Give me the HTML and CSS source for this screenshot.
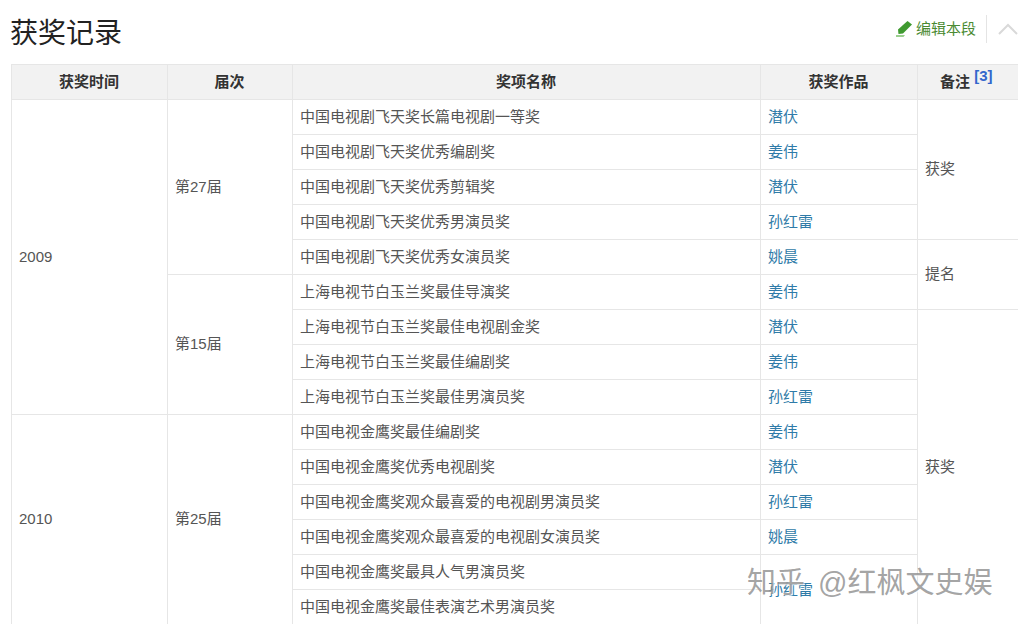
FILE: index.html
```html
<!DOCTYPE html>
<html lang="zh">
<head>
<meta charset="utf-8">
<title>获奖记录</title>
<link rel="stylesheet" href="styles.css">
</head>
<body>
<div class="page">
  <header class="head">
    <h2 class="title">获奖记录</h2>
    <div class="tools">
      <svg class="pen" width="18" height="18" viewBox="0 0 18 18"><path d="M12.500 1 17 4.500 8 13.500 3.500 14 3 9.500Z" fill="#3f9a30"/><path d="M1 15H10L8.500 17H1Z" fill="#9bcf8f"/></svg>
      <span class="edit">编辑本段</span>
      <span class="sep"></span>
      <svg class="up" width="20" height="12" viewBox="0 0 20 12"><path d="M1 11 10 2 19 11" fill="none" stroke="#d9d9d9" stroke-width="2"/></svg>
    </div>
  </header>
  <table class="awards">
    <colgroup><col class="c1"><col class="c2"><col class="c3"><col class="c4"><col class="c5"></colgroup>
    <thead>
      <tr><th>获奖时间</th><th>届次</th><th>奖项名称</th><th>获奖作品</th><th class="note">备注 <sup>[3]</sup></th></tr>
    </thead>
    <tbody>
      <tr><td rowspan="9">2009</td><td rowspan="5">第27届</td><td>中国电视剧飞天奖长篇电视剧一等奖</td><td><a>潜伏</a></td><td rowspan="4" class="tag">获奖</td></tr>
      <tr><td>中国电视剧飞天奖优秀编剧奖</td><td><a>姜伟</a></td></tr>
      <tr><td>中国电视剧飞天奖优秀剪辑奖</td><td><a>潜伏</a></td></tr>
      <tr><td>中国电视剧飞天奖优秀男演员奖</td><td><a>孙红雷</a></td></tr>
      <tr><td>中国电视剧飞天奖优秀女演员奖</td><td><a>姚晨</a></td><td rowspan="2" class="tag">提名</td></tr>
      <tr><td rowspan="4" class="tag">第15届</td><td>上海电视节白玉兰奖最佳导演奖</td><td><a>姜伟</a></td></tr>
      <tr><td>上海电视节白玉兰奖最佳电视剧金奖</td><td><a>潜伏</a></td><td rowspan="9">获奖</td></tr>
      <tr><td>上海电视节白玉兰奖最佳编剧奖</td><td><a>姜伟</a></td></tr>
      <tr><td>上海电视节白玉兰奖最佳男演员奖</td><td><a>孙红雷</a></td></tr>
      <tr><td rowspan="6" class="tag">2010</td><td rowspan="6" class="tag">第25届</td><td>中国电视金鹰奖最佳编剧奖</td><td><a>姜伟</a></td></tr>
      <tr><td>中国电视金鹰奖优秀电视剧奖</td><td><a>潜伏</a></td></tr>
      <tr><td>中国电视金鹰奖观众最喜爱的电视剧男演员奖</td><td><a>孙红雷</a></td></tr>
      <tr><td>中国电视金鹰奖观众最喜爱的电视剧女演员奖</td><td><a>姚晨</a></td></tr>
      <tr><td>中国电视金鹰奖最具人气男演员奖</td><td rowspan="2"><a>孙红雷</a></td></tr>
      <tr><td>中国电视金鹰奖最佳表演艺术男演员奖</td></tr>
    </tbody>
  </table>
  <div class="mark">知乎 @红枫文史娱</div>
</div>
</body>
</html>
```
FILE: styles.css
```css
html, body { margin: 0; padding: 0; background: #fff; }
.page {
  position: relative;
  width: 1018px;
  height: 624px;
  overflow: hidden;
  font-family: "Liberation Sans", "Noto Sans CJK SC", sans-serif;
  color: #333;
}
.head {
  display: flex;
  align-items: center;
  justify-content: space-between;
  height: 64px;
  padding-left: 10px;
}
.title {
  margin: 3px 0 0;
  font-size: 28px;
  font-weight: 400;
  color: #222;
  line-height: 61px;
}
.tools {
  display: flex;
  align-items: center;
  height: 28px;
  margin-top: -7px;
}
.pen { margin-right: 3px; }
.edit { font-size: 15px; color: #4a8a32; line-height: 28px; }
.sep { width: 1px; height: 28px; background: #e4e4e4; margin: 0 10px; }
.up { margin-left: 1px; }
.awards {
  border-collapse: collapse;
  table-layout: fixed;
  width: 1040px;
  margin-left: 11px;
  font-size: 15px;
}
.c1 { width: 156px; }
.c2 { width: 125px; }
.c3 { width: 468px; }
.c4 { width: 157px; }
.c5 { width: 134px; }
.awards th, .awards td {
  border: 1px solid #e6e6e6;
  padding: 0 8px 0 7px;
  height: 35px;
  box-sizing: border-box;
  line-height: 20px;
  overflow: hidden;
  white-space: nowrap;
}
.awards th {
  background: #f2f2f2;
  font-weight: 700;
  text-align: center;
  color: #333;
}
.awards td { font-weight: 400; color: #555; }
.awards td.tag { padding-bottom: 2px; }
.awards a { color: #2f7ba8; }
.awards th.note { text-align: left; padding-left: 22px; }
sup { color: #3366cc; font-size: 15px; line-height: 0; vertical-align: 6px; }
.mark {
  position: absolute;
  left: 747px;
  top: 563px;
  font-size: 29px;
  line-height: 40px;
  word-spacing: 5px;
  white-space: nowrap;
  color: rgba(140, 140, 140, 0.8);
  text-shadow: 1px 1px 1px rgba(255, 255, 255, 0.8);
}
```
